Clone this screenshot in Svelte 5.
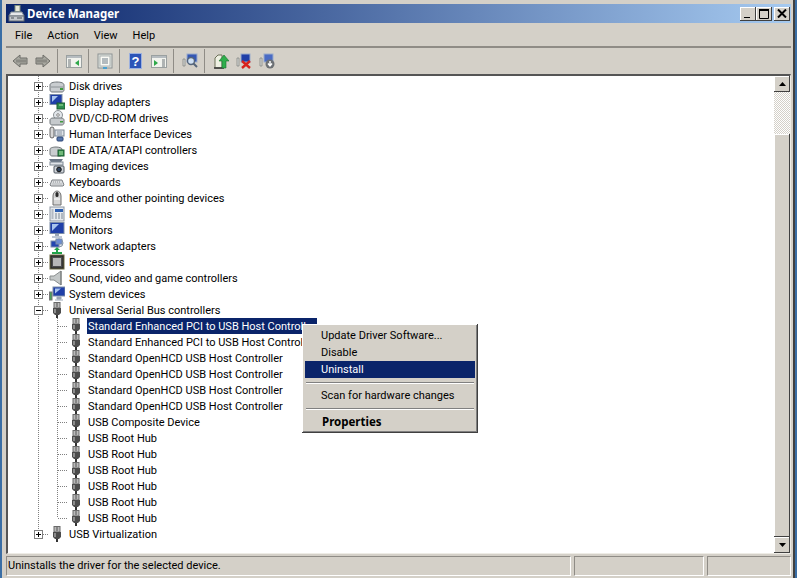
<script>
  const devices = [
    { name: "Disk drives", icon: "disk" },
    { name: "Display adapters", icon: "display" },
    { name: "DVD/CD-ROM drives", icon: "dvd" },
    { name: "Human Interface Devices", icon: "hid" },
    { name: "IDE ATA/ATAPI controllers", icon: "ide" },
    { name: "Imaging devices", icon: "imaging" },
    { name: "Keyboards", icon: "keyboard" },
    { name: "Mice and other pointing devices", icon: "mouse" },
    { name: "Modems", icon: "modem" },
    { name: "Monitors", icon: "monitor" },
    { name: "Network adapters", icon: "network" },
    { name: "Processors", icon: "cpu" },
    { name: "Sound, video and game controllers", icon: "sound" },
    { name: "System devices", icon: "system" }
  ];

  const usbChildren = [
    "Standard Enhanced PCI to USB Host Controller",
    "Standard Enhanced PCI to USB Host Controller",
    "Standard OpenHCD USB Host Controller",
    "Standard OpenHCD USB Host Controller",
    "Standard OpenHCD USB Host Controller",
    "Standard OpenHCD USB Host Controller",
    "USB Composite Device",
    "USB Root Hub",
    "USB Root Hub",
    "USB Root Hub",
    "USB Root Hub",
    "USB Root Hub",
    "USB Root Hub"
  ];

  const menus = ["File", "Action", "View", "Help"];
  const tools = [
    ["back", "forward"],
    ["console"],
    ["props"],
    ["help", "action"],
    ["scan"],
    ["update", "remove", "disable"]
  ];
</script>

{#snippet glyph(kind)}
  <svg class="glyph" width="16" height="16" viewBox="0 0 16 16">
    {#if kind === "usb"}
      <rect x="5" y="0.5" width="6" height="5.5" fill="#b9b9b9" stroke="#6a6a6a" />
      <path d="M7 2h2M7 4h2" stroke="#555" />
      <path d="M4 6h8v5l-2 2H6l-2-2z" fill="#4c4c4c" />
      <path d="M5 7h2v4H5z" fill="#8d8d8d" />
      <rect x="7" y="13" width="2" height="3" fill="#333" />
    {:else if kind === "disk"}
      <path d="M1 7c0-2 3-3 7-3s7 1 7 3v5c0 1-1 2-2 2H3c-1 0-2-1-2-2z" fill="#c9cdd0" stroke="#70767a" />
      <path d="M2 9h12" stroke="#8c9296" />
      <rect x="11" y="10" width="3" height="2" fill="#3f9a3f" />
    {:else if kind === "display"}
      <rect x="1" y="0.5" width="12" height="10" fill="#1f3fa8" stroke="#7d8ea8" />
      <path d="M3 2h6l-6 6z" fill="#a8c4ee" />
      <rect x="8" y="9" width="8" height="6" fill="#2f8f4e" stroke="#1d5a30" />
      <path d="M10 11h4" stroke="#a8e0a0" />
    {:else if kind === "dvd"}
      <circle cx="9" cy="5" r="4.5" fill="#e2e6ea" stroke="#8c9296" />
      <circle cx="9" cy="5" r="1.3" fill="#fff" stroke="#888" />
      <path d="M1 10c0-1 1-2 3-2h8c2 0 3 1 3 2v3c0 1-1 2-2 2H3c-1 0-2-1-2-2z" fill="#c6cacd" stroke="#70767a" />
      <rect x="11" y="11" width="3" height="1.5" fill="#3f9a3f" />
    {:else if kind === "hid"}
      <rect x="1" y="1" width="4" height="11" rx="2" fill="#d7d7d7" stroke="#666" />
      <rect x="6" y="4" width="9" height="6" fill="#dfe3e8" stroke="#7d8894" />
      <path d="M8 6h5M8 8h5" stroke="#8a96a4" />
      <rect x="8" y="11" width="6" height="4" rx="1" fill="#5576ad" stroke="#2d4675" />
    {:else if kind === "ide"}
      <path d="M1 7c0-1 3-2 6-2s6 1 6 2v5c0 1-1 2-2 2H3c-1 0-2-1-2-2z" fill="#c9cdd0" stroke="#70767a" />
      <rect x="9" y="8" width="6" height="6" fill="#2f8f4e" stroke="#1d5a30" />
      <path d="M10 10h4M10 12h4" stroke="#b5e3a8" />
    {:else if kind === "imaging"}
      <path d="M0 1h14l-2 3H2z" fill="#6a7686" />
      <rect x="1" y="4" width="13" height="3" fill="#dfe3e8" stroke="#7d8894" />
      <rect x="5" y="8" width="10" height="7" rx="1" fill="#cdd2d8" stroke="#4e5660" />
      <circle cx="10" cy="11.5" r="2.3" fill="#30445e" stroke="#111" />
    {:else if kind === "keyboard"}
      <path d="M1 11l2-5h10l2 5-1 1H2z" fill="#dcdee0" stroke="#7c8084" />
      <path d="M4 8h8M3.5 10h9" stroke="#8e9296" stroke-dasharray="1 1" />
    {:else if kind === "mouse"}
      <path d="M4 15V6c0-3 2-5 4-5s4 2 4 5v9z" fill="#d5d5d5" stroke="#6f6f6f" />
      <rect x="6.5" y="2" width="3" height="5" rx="1.5" fill="#2a2a2a" />
      <path d="M5 9h6" stroke="#fff" />
    {:else if kind === "modem"}
      <rect x="1" y="1" width="14" height="14" fill="#e7eaee" stroke="#8b95a1" />
      <rect x="6" y="3" width="8" height="3" fill="#2e5fb0" />
      <path d="M6 8h8M6 10h8M6 12h8" stroke="#7b8794" stroke-dasharray="2 1" />
      <rect x="2.5" y="3" width="2" height="10" fill="#b3bac3" />
    {:else if kind === "monitor"}
      <rect x="1" y="0.5" width="14" height="11" fill="#1f3fa8" stroke="#7d8ea8" />
      <path d="M3 2h7l-7 7z" fill="#a8c4ee" />
      <path d="M6 12h4v2H6z" fill="#9aa6b5" />
      <path d="M3 15h10" stroke="#7d8ea8" />
    {:else if kind === "network"}
      <circle cx="10" cy="5" r="4" fill="#dfe4ea" stroke="#8996a6" />
      <rect x="2" y="3" width="8" height="6" fill="#2346b0" stroke="#7d8ea8" />
      <rect x="7" y="1" width="6" height="5" fill="#6b8cd4" stroke="#7d8ea8" />
      <path d="M5 12l3-3 3 3H9v2H7v-2z" fill="#22a34a" />
      <rect x="3" y="14" width="10" height="2" fill="#22a34a" />
    {:else if kind === "cpu"}
      <rect x="0.5" y="0.5" width="15" height="15" fill="#6e6a45" />
      <rect x="2" y="2" width="12" height="12" fill="#4d4d4d" stroke="#222" />
      <rect x="4" y="4" width="8" height="8" fill="#b7b7b7" />
    {:else if kind === "sound"}
      <path d="M1 6h4l7-5v14l-7-5H1z" fill="#c4c8c8" stroke="#8a8e8e" />
      <path d="M12 1v14" stroke="#6f7373" />
    {:else if kind === "system"}
      <rect x="4" y="1" width="12" height="9" fill="#1f3fa8" stroke="#7d8ea8" />
      <path d="M6 2.5h6l-6 5z" fill="#a8c4ee" />
      <path d="M8 11h4v2H8zM6 14h8" fill="#9aa6b5" stroke="#9aa6b5" />
      <rect x="0.5" y="6" width="2.5" height="8" fill="#4aa05c" stroke="#777" />
    {:else if kind === "back"}
      <path d="M1 8l7-6v3h7v6H8v3z" fill="#a8a8a0" stroke="#6d6d68" />
      <path d="M4 8h10" stroke="#8a8a84" stroke-width="3" />
    {:else if kind === "forward"}
      <path d="M15 8L8 2v3H1v6h7v3z" fill="#a8a8a0" stroke="#6d6d68" />
      <path d="M2 8h10" stroke="#8a8a84" stroke-width="3" />
    {:else if kind === "console"}
      <rect x="0.5" y="2.5" width="15" height="12" fill="#f2f3ee" stroke="#9aa0a0" />
      <path d="M1 3h14v2H1z" fill="#b6bcc0" />
      <path d="M2 7h3M2 9h3M2 11h3M2 13h3" stroke="#6d7478" />
      <path d="M13 7v6l-4-3z" fill="#2fa84a" />
    {:else if kind === "props"}
      <rect x="1" y="1" width="14" height="14" fill="#dfe2dc" stroke="#8c9294" />
      <rect x="3" y="3" width="10" height="10" fill="#fafaf5" stroke="#aeb4b4" />
      <path d="M5 6h6M5 8h6M5 10h6" stroke="#6e7c88" />
      <path d="M6 15h4" stroke="#4aa0d0" stroke-width="2" />
    {:else if kind === "help"}
      <rect x="1.5" y="0.5" width="12" height="15" fill="#2c54b8" stroke="#9cb0de" />
      <text x="7.5" y="13" text-anchor="middle" font-size="13" font-weight="700" font-family="Liberation Sans" fill="#fff">?</text>
    {:else if kind === "action"}
      <rect x="0.5" y="2.5" width="15" height="12" fill="#f2f3ee" stroke="#9aa0a0" />
      <path d="M1 3h14v2H1z" fill="#b6bcc0" />
      <path d="M11 7h3M11 9h3M11 11h3M11 13h3" stroke="#6d7478" />
      <path d="M3 7v6l4-3z" fill="#2fa84a" />
    {:else if kind === "scan"}
      <path d="M1 6h2v7H1z" fill="#d6d8d4" stroke="#7c807c" stroke-width="0.7" />
      <rect x="5" y="1" width="10" height="8" fill="#3557b4" stroke="#9aaccc" />
      <circle cx="9" cy="8" r="3.5" fill="#cfe0f4" stroke="#55657a" stroke-width="1.4" />
      <path d="M11.5 10.5l3.5 3.5" stroke="#55657a" stroke-width="2" />
    {:else if kind === "update"}
      <path d="M2 15V5l3-3h4v13z" fill="#eef0e2" stroke="#6c7058" />
      <path d="M1 15h10" stroke="#333" stroke-width="1.5" />
      <path d="M11 2l5 6h-3v7h-4V8H6z" fill="#2fae4c" stroke="#17702c" stroke-width="0.6" />
    {:else if kind === "remove"}
      <path d="M1 5h2v8H1z" fill="#d6d8d4" stroke="#7c807c" stroke-width="0.7" />
      <rect x="5" y="1" width="9" height="8" fill="#1f3fa8" stroke="#9aaccc" />
      <path d="M6 8l8 7M14 8l-8 7" stroke="#d8201c" stroke-width="2.4" />
    {:else if kind === "disable"}
      <path d="M1 5h2v8H1z" fill="#d6d8d4" stroke="#7c807c" stroke-width="0.7" />
      <rect x="5" y="1" width="9" height="8" fill="#4a6bc4" stroke="#9aaccc" />
      <circle cx="11" cy="11" r="4.5" fill="#6c7074" />
      <path d="M11 8v4M9 10.5l2 2.5 2-2.5" stroke="#fff" stroke-width="1.4" fill="none" />
    {/if}
  </svg>
{/snippet}

{#snippet expander(open)}
  <span class="box">
    <svg width="9" height="9" viewBox="0 0 9 9">
      <rect x="0.5" y="0.5" width="8" height="8" fill="#fff" stroke="#808080" />
      <path d="M2 4.5h5" stroke="#000" />
      {#if !open}<path d="M4.5 2v5" stroke="#000" />{/if}
    </svg>
  </span>
{/snippet}

<div class="win">
  <header class="title">
    <svg class="appicon" width="17" height="17" viewBox="0 0 17 17">
      <rect x="7" y="0.5" width="5" height="6" fill="#e8e8d8" stroke="#7f8f7f" />
      <path d="M3 7h11l2 4H1z" fill="#e6e8ea" stroke="#7c8894" />
      <rect x="1" y="11" width="15" height="5" fill="#c4c8cc" stroke="#666e76" />
      <path d="M3 13h3M9 13h5" stroke="#4a525a" />
    </svg>
    <span class="title-text">Device Manager</span>
    <div class="caption">
      <span class="cap">
        <svg width="8" height="8" viewBox="0 0 8 8"><path d="M0 7h6v1.5H0z" fill="#000" /></svg>
      </span>
      <span class="cap">
        <svg width="10" height="10" viewBox="0 0 10 10"><path d="M0.5 1.5h9v8h-9z" fill="none" stroke="#000" /><path d="M0 1h10" stroke="#000" stroke-width="2" /></svg>
      </span>
      <span class="cap close">
        <svg width="10" height="9" viewBox="0 0 10 9"><path d="M1 0.5l8 8M9 0.5l-8 8" stroke="#000" stroke-width="2" /></svg>
      </span>
    </div>
  </header>

  <nav class="menubar">
    {#each menus as menu}
      <span class="menu">{menu}</span>
    {/each}
  </nav>

  <div class="toolbar">
    {#each tools as group, i}
      {#if i > 0}<span class="sep"></span>{/if}
      {#each group as tool}
        <span class="tool">{@render glyph(tool)}</span>
      {/each}
    {/each}
  </div>

  <div class="panel">
    <div class="tree">
      <div class="stub"></div>
      {#each devices as device}
        <div class="row">
          <span class="cell line joint">{@render expander(false)}</span>
          {@render glyph(device.icon)}
          <span class="label">{device.name}</span>
        </div>
      {/each}

      <div class="row">
        <span class="cell line joint">{@render expander(true)}</span>
        {@render glyph("usb")}
        <span class="label">Universal Serial Bus controllers</span>
      </div>

      {#each usbChildren as child, i}
        <div class="row">
          <span class="cell line"></span>
          <span class="cell joint {i === usbChildren.length - 1 ? 'half' : 'line'}"></span>
          {@render glyph("usb")}
          <span class="label" class:selected={i === 0}>{child}</span>
        </div>
      {/each}

      <div class="row">
        <span class="cell half joint">{@render expander(false)}</span>
        {@render glyph("usb")}
        <span class="label">USB Virtualization</span>
      </div>
    </div>

    <div class="scrollbar">
      <span class="sbtn"><svg width="7" height="4" viewBox="0 0 7 4"><path d="M3.5 0L7 4H0z" fill="#000" /></svg></span>
      <span class="track"></span>
      <span class="thumb"></span>
      <span class="sbtn down"><svg width="7" height="4" viewBox="0 0 7 4"><path d="M0 0h7L3.5 4z" fill="#000" /></svg></span>
    </div>
  </div>

  <footer class="status">
    <span class="pane main">Uninstalls the driver for the selected device.</span>
    <span class="pane mid"></span>
    <span class="pane end"></span>
  </footer>
</div>

<div class="context">
  <div class="item">Update Driver Software...</div>
  <div class="item">Disable</div>
  <div class="item active">Uninstall</div>
  <div class="divider"></div>
  <div class="item">Scan for hardware changes</div>
  <div class="divider"></div>
  <div class="item strong">Properties</div>
</div>

<style>
  :global(body) {
    background: #3a6ea5;
    overflow: hidden;
    font-family: Roboto, "Noto Sans", sans-serif;
    font-size: 11px;
    color: #000;
  }

  .win {
    margin-left: 2px;
    width: 793px;
    height: 578px;
    box-sizing: border-box;
    padding: 4px 2px 2px 4px;
    background: #d4d0c8;
    border-right: 2px solid #404040;
    display: flex;
    flex-direction: column;
  }

  .title {
    height: 19px;
    flex: none;
    display: flex;
    align-items: center;
    background: linear-gradient(90deg, #0a246a, #a6caf0);
    color: #fff;
  }

  .appicon {
    margin-left: 2px;
  }

  .title-text {
    margin-left: 2px;
    font-family: "Noto Sans", sans-serif;
    font-weight: 700;
    font-size: 11.5px;
  }

  .caption {
    margin-left: auto;
    display: flex;
    margin-right: 1px;
  }

  .cap {
    width: 16px;
    height: 14px;
    display: flex;
    align-items: center;
    justify-content: center;
    background: #d4d0c8;
    box-shadow: inset -1px -1px #404040, inset 1px 1px #fff;
  }

  .close {
    margin-left: 2px;
  }

  .menubar {
    height: 25px;
    flex: none;
    box-sizing: border-box;
    padding-left: 1.5px;
    display: flex;
    align-items: center;
    border-bottom: 2px solid #8f8c86;
  }

  .menu {
    padding: 2px 7.5px 0;
  }

  .toolbar {
    height: 25px;
    flex: none;
    padding-left: 2px;
    display: flex;
    align-items: center;
  }

  .tool {
    width: 23px;
    height: 16px;
    display: flex;
    justify-content: center;
  }

  .sep {
    width: 8px;
    height: 24px;
    box-sizing: border-box;
    background: linear-gradient(#8f8c86, #8f8c86) 3px 0 / 1px 100% no-repeat;
  }

  .panel {
    height: 480px;
    margin-top: 1px;
    flex: none;
    box-sizing: border-box;
    display: flex;
    background: #fff;
    border-top: 2px solid #555;
    border-left: 2px solid #555;
    border-right: 1px solid #eeece6;
    border-bottom: 1px solid #eeece6;
  }

  .tree {
    flex: 1;
    padding-left: 21px;
    overflow: hidden;
  }

  .stub {
    height: 2px;
    width: 19px;
    background: repeating-linear-gradient(#808080 0 1px, transparent 1px 2px) 9px 0 / 1px 2px no-repeat;
  }

  .row {
    height: 16px;
    display: flex;
    align-items: center;
    white-space: nowrap;
  }

  .glyph {
    flex: none;
  }

  .cell {
    width: 19px;
    height: 16px;
    flex: none;
    display: flex;
    align-items: center;
    padding-left: 5px;
    box-sizing: border-box;
    background-repeat: no-repeat;
  }

  .row > .glyph {
    margin-left: 1px;
  }

  /* dotted tree guides */
  .line {
    background-image: repeating-linear-gradient(#808080 0 1px, transparent 1px 2px);
    background-position: 9px 0;
    background-size: 1px 16px;
  }

  .half {
    background-image: repeating-linear-gradient(#808080 0 1px, transparent 1px 2px);
    background-position: 9px 0;
    background-size: 1px 8px;
  }

  .joint {
    background-image:
      repeating-linear-gradient(#808080 0 1px, transparent 1px 2px),
      repeating-linear-gradient(90deg, #808080 0 1px, transparent 1px 2px);
    background-position: 9px 0, 10px 8px;
    background-size: 1px 16px, 9px 1px;
  }

  .joint.half {
    background-size: 1px 8px, 9px 1px;
  }

  .box {
    display: block;
    width: 9px;
    height: 9px;
  }

  .box svg {
    display: block;
  }

  .label {
    margin-left: 3px;
    padding: 0 1px 0 1px;
    height: 16px;
    line-height: 18px;
  }

  .selected {
    background: #0a246a;
    color: #fff;
  }

  .scrollbar {
    width: 16px;
    flex: none;
    display: flex;
    flex-direction: column;
    background: #d4d0c8;
  }

  .sbtn {
    height: 16px;
    flex: none;
    display: flex;
    align-items: center;
    justify-content: center;
    background: #d4d0c8;
    box-shadow: inset -1px -1px #404040, inset 1px 1px #fff;
  }

  .track {
    height: 42px;
    flex: none;
    background-image: conic-gradient(#fff 25%, #d4d0c8 0 50%, #fff 0 75%, #d4d0c8 0);
    background-size: 2px 2px;
  }

  .thumb {
    flex: 1;
    background: #d4d0c8;
    box-shadow: inset -1px -1px #404040, inset 1px 1px #fff;
  }

  .status {
    flex: 1;
    margin-top: 2px;
    display: flex;
    gap: 3px;
  }

  .pane {
    box-sizing: border-box;
    border-top: 1px solid #8f8c86;
    border-left: 1px solid #8f8c86;
    border-right: 1px solid #fff;
    border-bottom: 1px solid #fff;
    line-height: 17px;
    white-space: nowrap;
  }

  .main {
    width: 566px;
    padding-left: 1px;
  }

  .mid {
    width: 130px;
  }

  .end {
    width: 84px;
  }

  .context {
    position: absolute;
    left: 302px;
    top: 324px;
    width: 176px;
    height: 109px;
    box-sizing: border-box;
    padding: 3px 3px;
    background: #d4d0c8;
    box-shadow: inset -1px -1px #404040, inset 1px 1px #fff, inset -2px -2px #808080;
  }

  .item {
    height: 17px;
    line-height: 18px;
    padding-left: 16px;
  }

  .active {
    background: #0a246a;
    color: #fff;
  }

  .strong {
    font-family: "Noto Sans", sans-serif;
    font-size: 11.5px;
    font-weight: 700;
    padding-left: 17px;
    line-height: 17px;
  }

  .divider {
    height: 9px;
    box-sizing: border-box;
    margin: 0 1px;
    background: linear-gradient(#808080, #808080) 0 4px / 100% 1px no-repeat,
      linear-gradient(#fff, #fff) 0 5px / 100% 1px no-repeat;
  }
</style>
